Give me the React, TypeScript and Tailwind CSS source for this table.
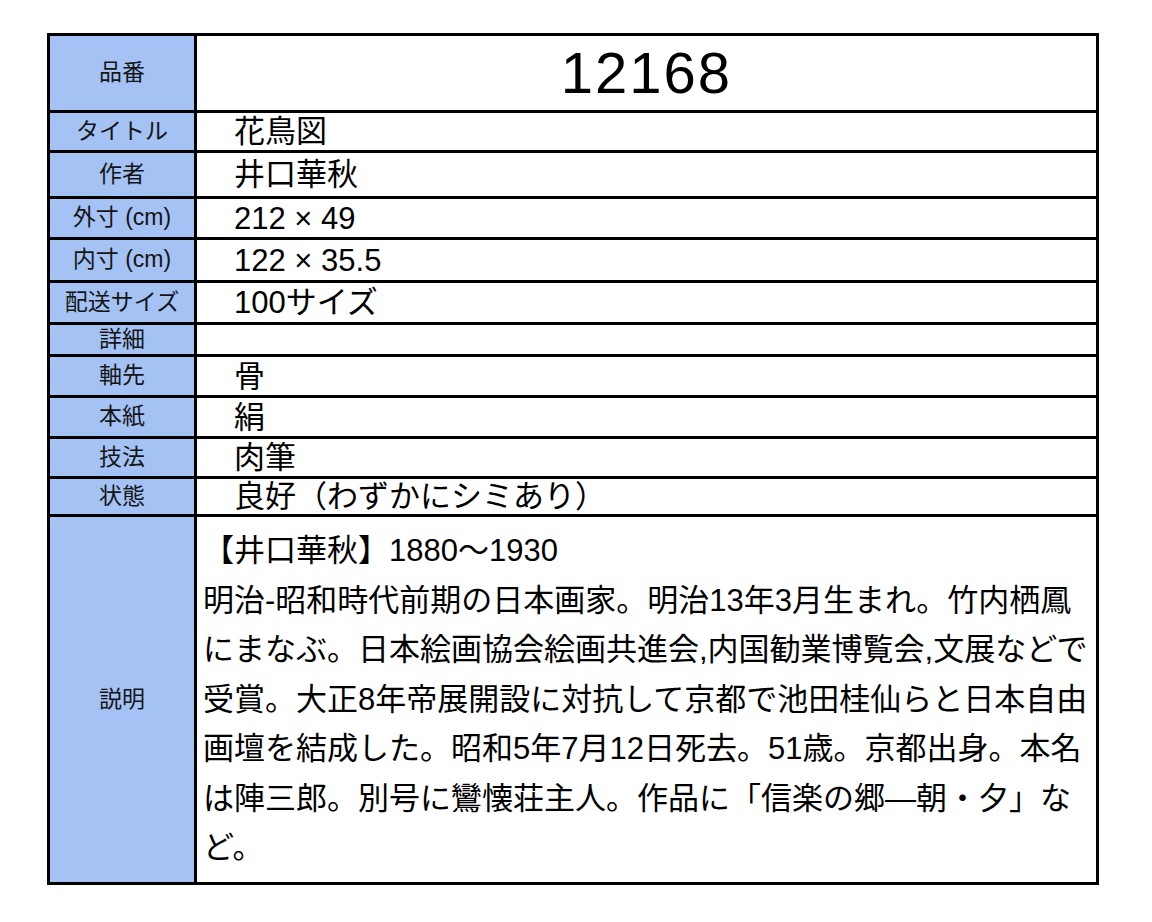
import React from 'react';

type Row = { label: string; value: string; h: string };

const rows: Row[] = [
    { label: 'タイトル', value: '花鳥図', h: 'h-[37px]' },
    { label: '作者', value: '井口華秋', h: 'h-[43px]' },
    { label: '外寸 (cm)', value: '212 × 49', h: 'h-[38px]' },
    { label: '内寸 (cm)', value: '122 × 35.5', h: 'h-[40px]' },
    { label: '配送サイズ', value: '100サイズ', h: 'h-[39px]' },
    { label: '詳細', value: '', h: 'h-[29px]' },
    { label: '軸先', value: '骨', h: 'h-[38px]' },
    { label: '本紙', value: '絹', h: 'h-[38px]' },
    { label: '技法', value: '肉筆', h: 'h-[37px]' },
    { label: '状態', value: '良好（わずかにシミあり）', h: 'h-[35px]' },
];

// 説明の本文（元画像の改行位置どおり）
const description = [
    '【井口華秋】1880〜1930',
    '明治-昭和時代前期の日本画家。明治13年3月生まれ。竹内栖鳳',
    'にまなぶ。日本絵画協会絵画共進会,内国勧業博覧会,文展などで',
    '受賞。大正8年帝展開設に対抗して京都で池田桂仙らと日本自由',
    '画壇を結成した。昭和5年7月12日死去。51歳。京都出身。本名',
    'は陣三郎。別号に鸞懐荘主人。作品に「信楽の郷—朝・夕」な',
    'ど。',
];

const labelClass = 'flex items-center justify-center bg-[#a4c2f4] text-[23px] leading-[1.2] text-[#151515]';

export default function App() {
    return (
        <div className="min-h-[922px] bg-white pt-[33px] pl-[47px] font-['Liberation_Sans','Noto_Sans_CJK_JP',sans-serif] text-black">
            <div className="grid w-[1052px] grid-cols-[144px_1fr] gap-[3px] bg-black p-[3px]">
                <div className={`h-[74px] ${labelClass}`}>品番</div>
                <div className="flex items-center justify-center bg-white text-[58px] leading-none tracking-[2px]">12168</div>

                {rows.map((row) => (
                    <React.Fragment key={row.label}>
                        <div className={`${row.h} ${labelClass}`}>{row.label}</div>
                        <div className="flex items-center bg-white pl-[37px] text-[31px] leading-none">{row.value}</div>
                    </React.Fragment>
                ))}

                <div className={`h-[365px] ${labelClass}`}>説明</div>
                <div className="flex flex-col justify-center bg-white pl-[6px] text-[31px] leading-[49.5px] whitespace-nowrap">
                    {description.map((line, i) => (
                        <div key={i}>{line}</div>
                    ))}
                </div>
            </div>
        </div>
    );
}
